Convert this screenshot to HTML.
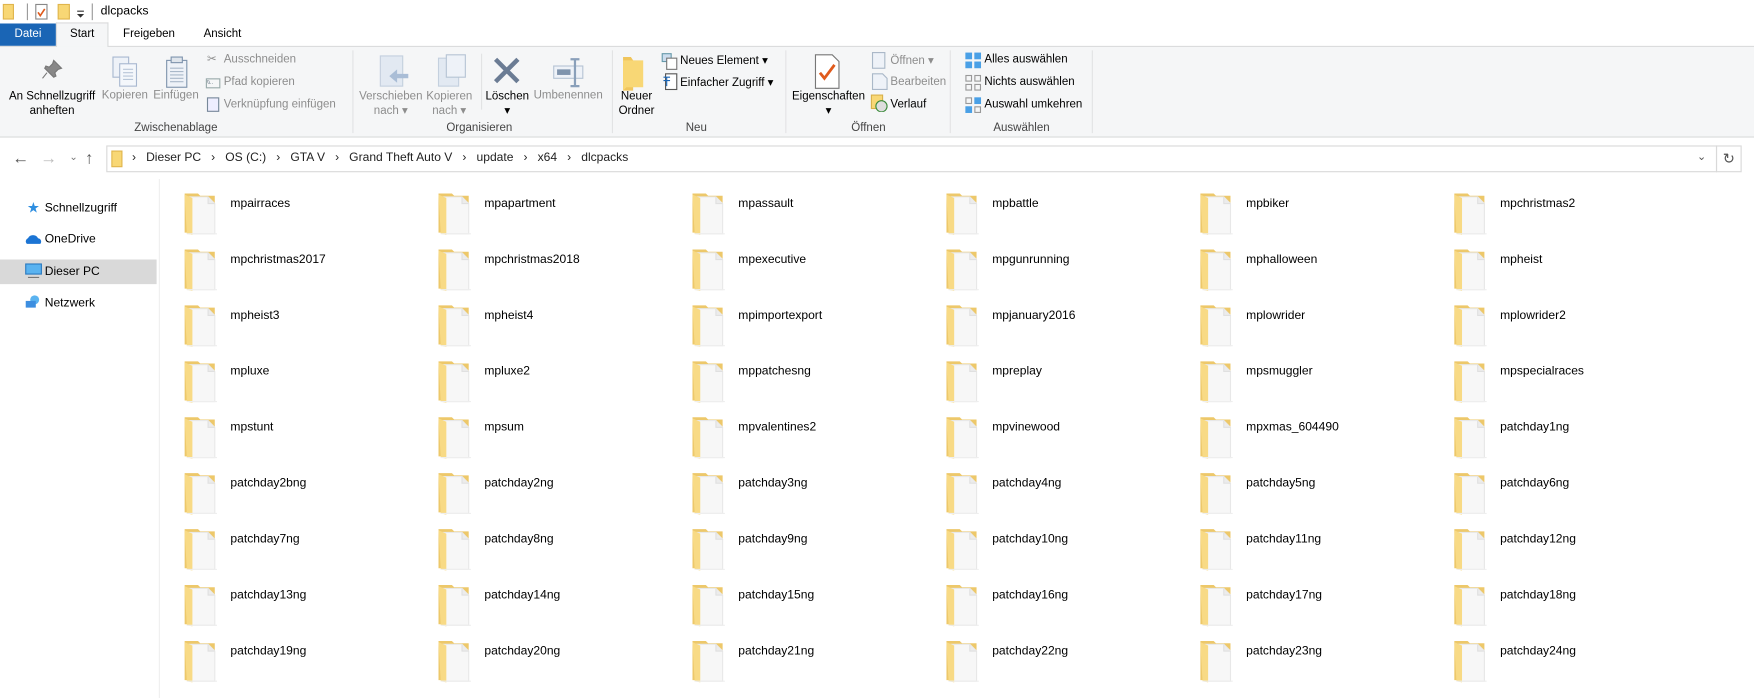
<!DOCTYPE html>
<html><head><meta charset="utf-8"><style>
*{margin:0;padding:0;box-sizing:border-box}
body{width:1754px;height:698px;overflow:hidden;background:#fff;font-family:"Liberation Sans",sans-serif;}
#w{position:absolute;left:0;top:0;width:1568px;height:624px;transform:scale(1.11862);transform-origin:0 0;font-size:10.3px;color:#000}
.a{position:absolute;white-space:nowrap}
.g{color:#8d8d8d}
.lbl{color:#444}
.sep{position:absolute;top:45px;width:1px;height:74px;background:#e2e3e4}
.it{position:absolute;width:200px;height:46px}
.it svg{position:absolute;left:0;top:0}
.it span{position:absolute;left:41px;top:4px;font-size:10.8px}
</style></head><body><div id="w">
<svg class="a" style="left:2px;top:3px" width="90" height="16"><rect x="1" y="1" width="9" height="13" fill="#f8d775" stroke="#e0b54c"/><rect x="22" y="0" width="1" height="15" fill="#999"/><rect x="30" y="1" width="10" height="13" fill="#fff" stroke="#888"/><path d="M32 8l2 3 4-6" stroke="#e05a1c" fill="none" stroke-width="1.5"/><rect x="50" y="1" width="10" height="13" fill="#f8d775" stroke="#e0b54c"/><path d="M67 7h6M68 10h4l-2 2z" stroke="#333" fill="#333"/><rect x="80" y="0" width="1" height="15" fill="#999"/></svg>
<div class="a" style="left:90px;top:4px;font-size:11px">dlcpacks</div>
<div class="a" style="left:0;top:21px;width:50px;height:20px;background:#1a65b5;color:#fff;text-align:center;line-height:20px">Datei</div>
<div class="a" style="left:50px;top:20px;width:47px;height:22px;background:#f5f6f7;border:1px solid #dadbdc;border-bottom:none;text-align:center;line-height:20px;z-index:2">Start</div>
<div class="a" style="left:110px;top:25px">Freigeben</div>
<div class="a" style="left:182px;top:25px">Ansicht</div>
<div class="a" style="left:0;top:41px;width:1568px;height:1px;background:#dadbdc"></div>
<div class="a" style="left:0;top:42px;width:1568px;height:81px;background:#f5f6f7;border-bottom:1px solid #dadbdc"></div>
<svg class="a" style="left:36px;top:52px" width="22" height="22"><path d="M12 2l7 7-3 1-3 3 1 3-2 1-8-8 1-2 3 1 3-3z M6 13l-4 5" stroke="#777" fill="#888"/></svg>
<div class="a" style="left:8px;top:80px;text-align:center;line-height:13px">An Schnellzugriff<br>anheften</div>
<svg class="a" style="left:100px;top:50px" width="24" height="30"><rect x="1" y="1" width="14" height="18" fill="#eef2f8" stroke="#a8b8d0"/><rect x="7" y="7" width="15" height="20" fill="#f4f7fb" stroke="#a8b8d0"/><path d="M10 12h9M10 15h9M10 18h9M10 21h9" stroke="#b8c6d8"/></svg>
<div class="a g" style="left:91px;top:80px">Kopieren</div>
<svg class="a" style="left:147px;top:50px" width="22" height="30"><rect x="2" y="4" width="18" height="24" fill="#eef2f8" stroke="#7f94ad"/><rect x="6" y="1" width="10" height="5" fill="#dfe5ec" stroke="#7f94ad"/><path d="M5 11h12M5 14h12M5 17h12M5 20h12M5 23h12" stroke="#a9b8c9"/></svg>
<div class="a g" style="left:137px;top:80px">Einfügen</div>
<div class="a g" style="left:185px;top:47px">✂</div>
<div class="a g" style="left:200px;top:48px">Ausschneiden</div>
<div class="a" style="left:184px;top:70px;width:13px;height:9px;border:1px solid #9aa;font-size:5px;color:#567">\\..</div>
<div class="a g" style="left:200px;top:68px">Pfad kopieren</div>
<div class="a" style="left:185px;top:87px;width:11px;height:13px;border:1px solid #789;background:#eef"></div>
<div class="a g" style="left:200px;top:88px">Verknüpfung einfügen</div>
<div class="a lbl" style="left:120px;top:109px">Zwischenablage</div>
<div class="sep" style="left:315px"></div>
<svg class="a" style="left:337px;top:48px" width="30" height="32"><rect x="3" y="2" width="20" height="27" fill="#e2e9f2" stroke="#c4d0de"/><path d="M28 18h-10v-4l-7 6 7 6v-4h10z" fill="#a9bdd6"/></svg>
<div class="a g" style="left:321px;top:80px;text-align:center;line-height:13px">Verschieben<br>nach ▾</div>
<svg class="a" style="left:390px;top:48px" width="30" height="32"><rect x="2" y="4" width="18" height="25" fill="#e2e9f2" stroke="#c4d0de"/><rect x="9" y="1" width="17" height="20" fill="#eef2f8" stroke="#b6c4d4"/></svg>
<div class="a g" style="left:381px;top:80px;text-align:center;line-height:13px">Kopieren<br>nach ▾</div>
<div class="a" style="left:430px;top:48px;width:1px;height:50px;background:#e2e3e4"></div>
<svg class="a" style="left:440px;top:50px" width="26" height="26"><path d="M3 3L23 23M23 3L3 23" stroke="#6b7c94" stroke-width="4"/></svg>
<div class="a" style="left:434px;top:80px;text-align:center;line-height:13px">Löschen<br>▾</div>
<svg class="a" style="left:494px;top:50px" width="30" height="30"><rect x="1" y="9" width="26" height="11" fill="#eef2f8" stroke="#b6c4d4"/><rect x="4" y="12" width="12" height="5" fill="#7f94ad"/><path d="M20 3v24M16 3h8M16 27h8" stroke="#8aa0ba" stroke-width="2"/></svg>
<div class="a g" style="left:477px;top:80px">Umbenennen</div>
<div class="a lbl" style="left:399px;top:109px">Organisieren</div>
<div class="sep" style="left:547px"></div>
<svg class="a" style="left:556px;top:50px" width="24" height="32"><path d="M1 1h7l2 3v27H1z" fill="#f0c55c"/><path d="M4 4h15v24H4l-3 3V4z" fill="#f8d775"/></svg>
<div class="a" style="left:553px;top:80px;text-align:center;line-height:13px">Neuer<br>Ordner</div>
<svg class="a" style="left:591px;top:47px" width="16" height="16"><rect x="1" y="1" width="8" height="7" fill="#cde" stroke="#69a"/><rect x="5" y="5" width="9" height="10" fill="#fff" stroke="#777"/></svg>
<div class="a" style="left:608px;top:48px">Neues Element ▾</div>
<svg class="a" style="left:593px;top:64px" width="14" height="18"><rect x="2" y="2" width="10" height="14" fill="#fff" stroke="#555"/><path d="M0 5h6M0 8h6M3 5v8" stroke="#1a65b5"/></svg>
<div class="a" style="left:608px;top:68px">Einfacher Zugriff ▾</div>
<div class="a lbl" style="left:613px;top:109px">Neu</div>
<div class="sep" style="left:702px"></div>
<svg class="a" style="left:728px;top:48px" width="24" height="32"><path d="M1 1h15l6 6v24H1z" fill="#fff" stroke="#777"/><path d="M5 17l4 5 9-12" stroke="#e05a1c" stroke-width="2.5" fill="none"/></svg>
<div class="a" style="left:708px;top:80px;text-align:center;line-height:13px">Eigenschaften<br>▾</div>
<svg class="a" style="left:779px;top:46px" width="16" height="16"><rect x="1" y="1" width="11" height="14" fill="#eef2f8" stroke="#aab8c8"/></svg>
<div class="a g" style="left:796px;top:48px">Öffnen ▾</div>
<svg class="a" style="left:779px;top:65px" width="16" height="16"><path d="M1 1h9l4 4v10H1z" fill="#eef2f8" stroke="#aab8c8"/></svg>
<div class="a g" style="left:796px;top:68px">Bearbeiten</div>
<svg class="a" style="left:778px;top:84px" width="16" height="16"><rect x="1" y="1" width="10" height="12" fill="#f8d775" stroke="#d8b04a"/><circle cx="10" cy="11" r="5" fill="#ddd" stroke="#3a8a3a"/></svg>
<div class="a" style="left:796px;top:88px">Verlauf</div>
<div class="a lbl" style="left:761px;top:109px">Öffnen</div>
<div class="sep" style="left:849px"></div>
<svg class="a" style="left:862px;top:46px" width="16" height="60"><g fill="#4aa0e6"><rect x="1" y="1" width="6" height="6"/><rect x="9" y="1" width="6" height="6"/><rect x="1" y="9" width="6" height="6"/><rect x="9" y="9" width="6" height="6"/></g><g fill="none" stroke="#999"><rect x="1.5" y="21.5" width="5" height="5"/><rect x="9.5" y="21.5" width="5" height="5"/><rect x="1.5" y="29.5" width="5" height="5"/><rect x="9.5" y="29.5" width="5" height="5"/><rect x="1.5" y="41.5" width="5" height="5"/><rect x="9.5" y="49.5" width="5" height="5"/></g><rect x="9" y="41" width="6" height="6" fill="#4aa0e6"/><rect x="1" y="49" width="6" height="6" fill="#4aa0e6"/></svg>
<div class="a" style="left:880px;top:48px">Alles auswählen</div>
<div class="a" style="left:880px;top:68px">Nichts auswählen</div>
<div class="a" style="left:880px;top:88px">Auswahl umkehren</div>
<div class="a lbl" style="left:888px;top:109px">Auswählen</div>
<div class="sep" style="left:976px"></div>
<div class="a" style="left:11px;top:133px;font-size:15px;color:#555">←</div>
<div class="a" style="left:36px;top:133px;font-size:15px;color:#bbb">→</div>
<div class="a" style="left:62px;top:135px;font-size:9px;color:#777">⌄</div>
<div class="a" style="left:76px;top:133px;font-size:15px;color:#555">↑</div>
<div class="a" style="left:95px;top:130px;width:1440px;height:24px;border:1px solid #d9d9d9"></div>
<div class="a" style="left:1534px;top:130px;width:23px;height:24px;border:1px solid #d9d9d9;text-align:center;line-height:22px;color:#555;font-size:13px">↻</div>
<svg class="a" style="left:99px;top:134px" width="12" height="16"><path d="M1 1h9v14H1z" fill="#f8d775" stroke="#e0b54c"/></svg>
<div class="a" style="left:118px;top:135px;color:#222;font-size:10.8px">›&nbsp;&nbsp; Dieser PC &nbsp;&nbsp;›&nbsp;&nbsp; OS (C:) &nbsp;&nbsp;›&nbsp;&nbsp; GTA V &nbsp;&nbsp;›&nbsp;&nbsp; Grand Theft Auto V &nbsp;&nbsp;›&nbsp;&nbsp; update &nbsp;&nbsp;›&nbsp;&nbsp; x64 &nbsp;&nbsp;›&nbsp;&nbsp; dlcpacks</div>
<div class="a" style="left:1517px;top:135px;font-size:10px;color:#555">⌄</div>
<div class="a" style="left:0;top:232px;width:140px;height:22px;background:#d9d9d9"></div>
<div class="a" style="left:142px;top:160px;width:1px;height:464px;background:#f0f0f0"></div>
<div class="a" style="left:24px;top:178px;color:#2e8ee0;font-size:13px">★</div>
<div class="a" style="left:40px;top:180px;font-size:10.8px">Schnellzugriff</div>
<svg class="a" style="left:22px;top:209px" width="16" height="10"><path d="M2 9a3 3 0 0 1 1-5 5 5 0 0 1 9 0 3 3 0 0 1 2 5z" fill="#1b74d4"/></svg>
<div class="a" style="left:40px;top:208px;font-size:10.8px">OneDrive</div>
<svg class="a" style="left:22px;top:235px" width="16" height="14"><rect x="1" y="1" width="14" height="9" fill="#5ab3f0" stroke="#2a7ac0"/><path d="M3 13h10" stroke="#777"/></svg>
<div class="a" style="left:40px;top:237px;font-size:10.8px">Dieser PC</div>
<svg class="a" style="left:22px;top:263px" width="16" height="14"><circle cx="9" cy="5" r="4" fill="#5ab3f0"/><rect x="1" y="6" width="9" height="6" fill="#3c8ee0"/></svg>
<div class="a" style="left:40px;top:265px;font-size:10.8px">Netzwerk</div>
<div id="g"></div>
</div>
<script>
var n=["mpairraces","mpapartment","mpassault","mpbattle","mpbiker","mpchristmas2","mpchristmas2017","mpchristmas2018","mpexecutive","mpgunrunning","mphalloween","mpheist","mpheist3","mpheist4","mpimportexport","mpjanuary2016","mplowrider","mplowrider2","mpluxe","mpluxe2","mppatchesng","mpreplay","mpsmuggler","mpspecialraces","mpstunt","mpsum","mpvalentines2","mpvinewood","mpxmas_604490","patchday1ng","patchday2bng"];
for(var i=2;i<=24;i++)n.push("patchday"+i+"ng");
var ic='<svg width="36" height="40"><path d="M0 1h12l2 2h13v33H0z" fill="#edc86a"/><path d="M4 4h17l6 6v27H4z" fill="#f7f7f7" stroke="#e8e8e8"/><path d="M21 4v6h6" fill="#ececec" stroke="#e0e0e0"/><path d="M0 2l7 3v33l-5 -1z" fill="#f8da85"/><path d="M2 37h27" stroke="#eeeeee"/></svg>';
var h="";
n.forEach(function(t,k){var c=k%6,r=Math.floor(k/6);h+='<div class="it" style="left:'+(165+227*c)+'px;top:'+(172+50*r)+'px">'+ic+'<span>'+t+'</span></div>';});
document.getElementById("g").outerHTML=h;
</script>
</body></html>
